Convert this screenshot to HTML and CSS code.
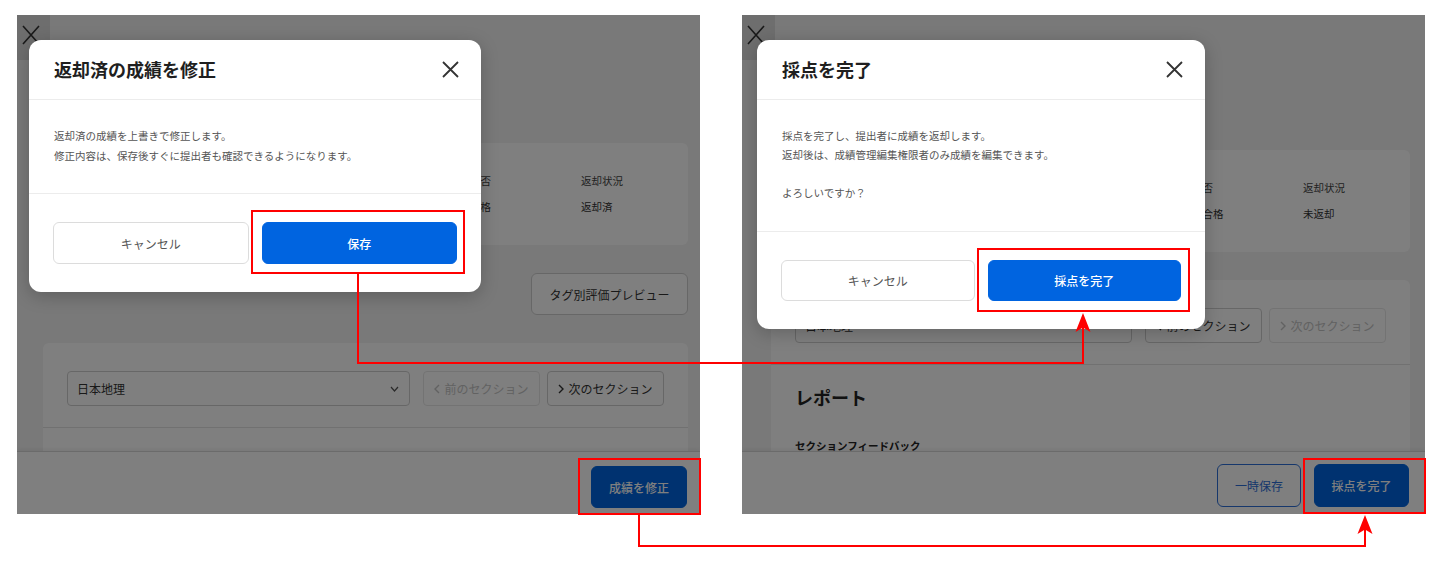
FILE: index.html
```html
<!DOCTYPE html>
<html lang="ja">
<head>
<meta charset="utf-8">
<title>成績の修正と採点完了</title>
<link rel="stylesheet" href="styles.css">
</head>
<body>
<div class="stage">

  <section class="screen screen--edit">
    <div class="screen-main">
      <div class="topbar">
        <span class="back-close"><svg viewBox="0 0 18 20" width="18" height="20"><path d="M1 1L17 19M17 1L1 19"/></svg></span>
        <span class="page-title">課題の採点　／　地理テスト　山田 太郎</span>
      </div>
      <div class="content">
        <div class="student-head"></div>
        <div class="info-card">
          <dl class="info-col"><dt>合否</dt><dd>合格</dd></dl>
          <dl class="info-col"><dt>返却状況</dt><dd>返却済</dd></dl>
        </div>
        <div class="toolbar"><button class="btn btn-outline btn-tag">タグ別評価プレビュー</button></div>
        <div class="section-card">
          <div class="section-nav">
            <div class="select"><span>日本地理</span><svg viewBox="0 0 9 6" width="9" height="6"><path d="M1 1L4.5 5L8 1"/></svg></div>
            <button class="btn btn-nav is-disabled"><svg viewBox="0 0 6 10" width="6" height="10"><path d="M5 1L1 5L5 9"/></svg>前のセクション</button>
            <button class="btn btn-nav"><svg viewBox="0 0 6 10" width="6" height="10"><path d="M1 1L5 5L1 9"/></svg>次のセクション</button>
          </div>
          <div class="section-body"></div>
        </div>
      </div>
    </div>
    <footer class="screen-footer">
      <button class="btn btn-primary btn-foot">成績を修正</button>
    </footer>
    <div class="overlay"></div>
    <div class="dialog dialog--edit">
      <div class="dialog-head">
        <h3>返却済の成績を修正</h3>
        <span class="dialog-close"><svg viewBox="0 0 17 17" width="17" height="17"><path d="M1 1L16 16M16 1L1 16"/></svg></span>
      </div>
      <div class="dialog-body">
        <p>返却済の成績を上書きで修正します。<br>修正内容は、保存後すぐに提出者も確認できるようになります。</p>
      </div>
      <div class="dialog-footer">
        <button class="btn btn-cancel">キャンセル</button>
        <button class="btn btn-primary">保存</button>
      </div>
    </div>
  </section>

  <section class="screen screen--grade">
    <div class="screen-main">
      <div class="topbar">
        <span class="back-close"><svg viewBox="0 0 18 20" width="18" height="20"><path d="M1 1L17 19M17 1L1 19"/></svg></span>
      </div>
      <div class="content">
        <div class="student-head"></div>
        <div class="info-card">
          <dl class="info-col"><dt>合否</dt><dd>不合格</dd></dl>
          <dl class="info-col"><dt>返却状況</dt><dd>未返却</dd></dl>
        </div>
        <div class="section-card">
          <div class="section-nav">
            <div class="select"><span>日本地理</span><svg viewBox="0 0 9 6" width="9" height="6"><path d="M1 1L4.5 5L8 1"/></svg></div>
            <button class="btn btn-nav"><svg viewBox="0 0 6 10" width="6" height="10"><path d="M5 1L1 5L5 9"/></svg>前のセクション</button>
            <button class="btn btn-nav is-disabled"><svg viewBox="0 0 6 10" width="6" height="10"><path d="M1 1L5 5L1 9"/></svg>次のセクション</button>
          </div>
          <div class="section-body">
            <h4 class="report-title">レポート</h4>
            <p class="report-label">セクションフィードバック</p>
          </div>
        </div>
      </div>
    </div>
    <footer class="screen-footer">
      <button class="btn btn-ghost btn-foot">一時保存</button>
      <button class="btn btn-primary btn-foot">採点を完了</button>
    </footer>
    <div class="overlay"></div>
    <div class="dialog dialog--grade">
      <div class="dialog-head">
        <h3>採点を完了</h3>
        <span class="dialog-close"><svg viewBox="0 0 17 17" width="17" height="17"><path d="M1 1L16 16M16 1L1 16"/></svg></span>
      </div>
      <div class="dialog-body">
        <p>採点を完了し、提出者に成績を返却します。<br>返却後は、成績管理編集権限者のみ成績を編集できます。</p>
        <p>よろしいですか？</p>
      </div>
      <div class="dialog-footer">
        <button class="btn btn-cancel">キャンセル</button>
        <button class="btn btn-primary">採点を完了</button>
      </div>
    </div>
  </section>

</div>

<svg class="annotations" viewBox="0 0 1444 567" width="1444" height="567">
  <g class="note-box">
    <rect x="252" y="211" width="212" height="62"/>
    <rect x="579" y="459" width="121" height="55"/>
    <rect x="978" y="249" width="211" height="62"/>
    <rect x="1304" y="459" width="121" height="54"/>
  </g>
  <g class="note-line">
    <path d="M358 274V363H1083V320"/>
    <path d="M639 515V546H1365V521"/>
  </g>
  <g class="note-head">
    <path d="M1083 313L1090.5 332L1083 327.5L1075.5 332Z"/>
    <path d="M1365 515L1372.5 534L1365 529.5L1357.5 534Z"/>
  </g>
</svg>
</body>
</html>
```

FILE: styles.css
```css
* { box-sizing: border-box; }

html, body {
  margin: 0;
  padding: 0;
  background: #ffffff;
}

body {
  width: 1444px;
  height: 567px;
  overflow: hidden;
  position: relative;
  font-family: "Noto Sans CJK JP", "Noto Sans", sans-serif;
  color: #333;
}

.stage {
  display: flex;
  gap: 42px;
  padding: 15px 0 0 17px;
}

/* ---------- screen (underlying page) ---------- */
.screen {
  position: relative;
  width: 683px;
  height: 499px;
  overflow: hidden;
  background: #f3f3f3;
  display: flex;
  flex-direction: column;
}

.screen-main {
  flex: 1;
  min-height: 0;
  overflow: hidden;
}

.topbar {
  height: 45px;
  display: flex;
  align-items: flex-start;
}

.back-close {
  width: 33px;
  height: 45px;
  background: #dcdcdc;
  display: flex;
  padding: 10px 0 0 5px;
}

.back-close svg path {
  stroke: #333;
  stroke-width: 1.6;
  fill: none;
}

.page-title {
  margin-left: 3px;
  padding-top: 23px;
  font-size: 12px;
  line-height: 16px;
  color: #777;
}

.content { padding: 0 12px 0 26px; }
.screen--grade .content { padding: 0 15px 0 29px; }

.student-head { height: 83px; }
.screen--grade .student-head { height: 90px; }

.info-card {
  background: #ffffff;
  border-radius: 6px;
  padding: 30px 24px;
  display: grid;
  grid-template-columns: 111px 83px;
  justify-content: end;
}

.info-col { margin: 0; }
.info-col dt {
  font-size: 10.5px;
  line-height: 16px;
  color: #444;
  white-space: nowrap;
}
.info-col dd {
  margin: 10px 0 0;
  font-size: 10.5px;
  line-height: 16px;
  color: #333;
  white-space: nowrap;
}

.toolbar {
  display: flex;
  justify-content: flex-end;
  margin-top: 28px;
}

.section-card {
  margin-top: 28px;
  background: #ffffff;
  border-radius: 6px 6px 0 0;
}

.section-nav {
  display: flex;
  align-items: center;
  padding: 28px 24px 21px;
  border-bottom: 1px solid #e2e2e2;
}

.select {
  flex: 1;
  height: 35px;
  border: 1px solid #cfcfcf;
  border-radius: 4px;
  background: #fff;
  display: flex;
  align-items: center;
  justify-content: space-between;
  padding: 0 10px 0 9px;
  font-size: 12px;
  color: #333;
  margin-right: 13px;
}

.select svg path {
  stroke: #555;
  stroke-width: 1.2;
  fill: none;
}

.section-body { padding: 20px 24px 30px; }

.report-title {
  margin: 0;
  font-size: 18px;
  line-height: 24px;
  font-weight: 700;
  color: #222;
}

.report-label {
  margin: 29px 0 0;
  font-size: 10.5px;
  line-height: 16px;
  font-weight: 700;
  color: #222;
}

/* ---------- buttons ---------- */
.btn {
  font-family: inherit;
  font-size: 12px;
  border-radius: 6px;
  display: inline-flex;
  align-items: center;
  justify-content: center;
  padding: 0;
  cursor: pointer;
}

.btn-outline {
  background: #fff;
  border: 1px solid #cfcfcf;
  color: #333;
}

.btn-tag {
  width: 157px;
  height: 42px;
}

.btn-nav {
  width: 117px;
  height: 35px;
  background: #fff;
  border: 1px solid #cfcfcf;
  border-radius: 4px;
  color: #333;
  gap: 4px;
}

.btn-nav + .btn-nav { margin-left: 7px; }

.btn-nav svg path {
  stroke: #333;
  stroke-width: 1.4;
  fill: none;
}

.btn-nav.is-disabled {
  color: #c4c4c4;
  border-color: #e6e6e6;
}

.btn-nav.is-disabled svg path { stroke: #c4c4c4; }

.btn-primary {
  background: #0064e0;
  border: 1px solid #0064e0;
  color: #fff;
  font-weight: 500;
}

.btn-ghost {
  background: #fff;
  border: 1px solid #2d6fd8;
  color: #2d6fd8;
}

.btn-cancel {
  background: #fff;
  border: 1px solid #dcdcdc;
  color: #555;
}

/* ---------- footer of the page ---------- */
.screen-footer {
  flex: none;
  height: 63px;
  background: #fff;
  border-top: 1px solid #d6d6d6;
  box-shadow: 0 -2px 4px rgba(0, 0, 0, 0.06);
  display: flex;
  justify-content: flex-end;
  align-items: flex-start;
  gap: 13px;
  padding: 14px 13px 0 0;
  position: relative;
}

.screen--grade .screen-footer { padding: 12px 16px 0 0; }

.btn-foot {
  height: 42px;
  width: 96px;
}

.screen--grade .btn-foot { width: 84px; height: 43px; }
.screen--grade .btn-foot.btn-primary { width: 95px; }

/* ---------- modal ---------- */
.overlay {
  position: absolute;
  inset: 0;
  background: rgba(0, 0, 0, 0.5);
}

.dialog {
  position: absolute;
  top: 25px;
  background: #fff;
  border-radius: 12px;
  box-shadow: 0 4px 18px rgba(0, 0, 0, 0.22);
  overflow: hidden;
}

.dialog--edit { left: 12px; width: 452px; }
.dialog--grade { left: 15px; width: 448px; }

.dialog-head {
  height: 60px;
  border-bottom: 1px solid #ececec;
  display: flex;
  align-items: center;
  justify-content: space-between;
  padding: 0 22px 1px 25px;
}

.dialog-head h3 {
  margin: 0;
  font-size: 18px;
  font-weight: 700;
  color: #1f1f1f;
  letter-spacing: 0;
}

.dialog-close {
  display: flex;
  width: 17px;
  height: 17px;
}

.dialog-close svg path {
  stroke: #333;
  stroke-width: 1.8;
  fill: none;
}

.dialog-body {
  padding: 26px 25px 28px;
  border-bottom: 1px solid #ececec;
}

.dialog-body p {
  margin: 0;
  font-size: 10.5px;
  line-height: 19.5px;
  color: #555;
}

.dialog--grade .dialog-body p { line-height: 19px; }
.dialog--grade .dialog-body p + p { margin-top: 19px; }
.dialog--grade .dialog-body { padding-bottom: 29px; }

.dialog-footer {
  display: flex;
  gap: 13px;
  padding: 28px 24px;
}

.dialog-footer .btn {
  flex: 1;
  height: 42px;
}

.dialog--grade .dialog-footer .btn { height: 41px; }

/* ---------- annotations ---------- */
.annotations {
  position: absolute;
  left: 0;
  top: 0;
  pointer-events: none;
}

.note-box rect,
.note-line path {
  fill: none;
  stroke: #ff0000;
  stroke-width: 2;
}

.note-head path {
  fill: #ff0000;
  stroke: none;
}
```
